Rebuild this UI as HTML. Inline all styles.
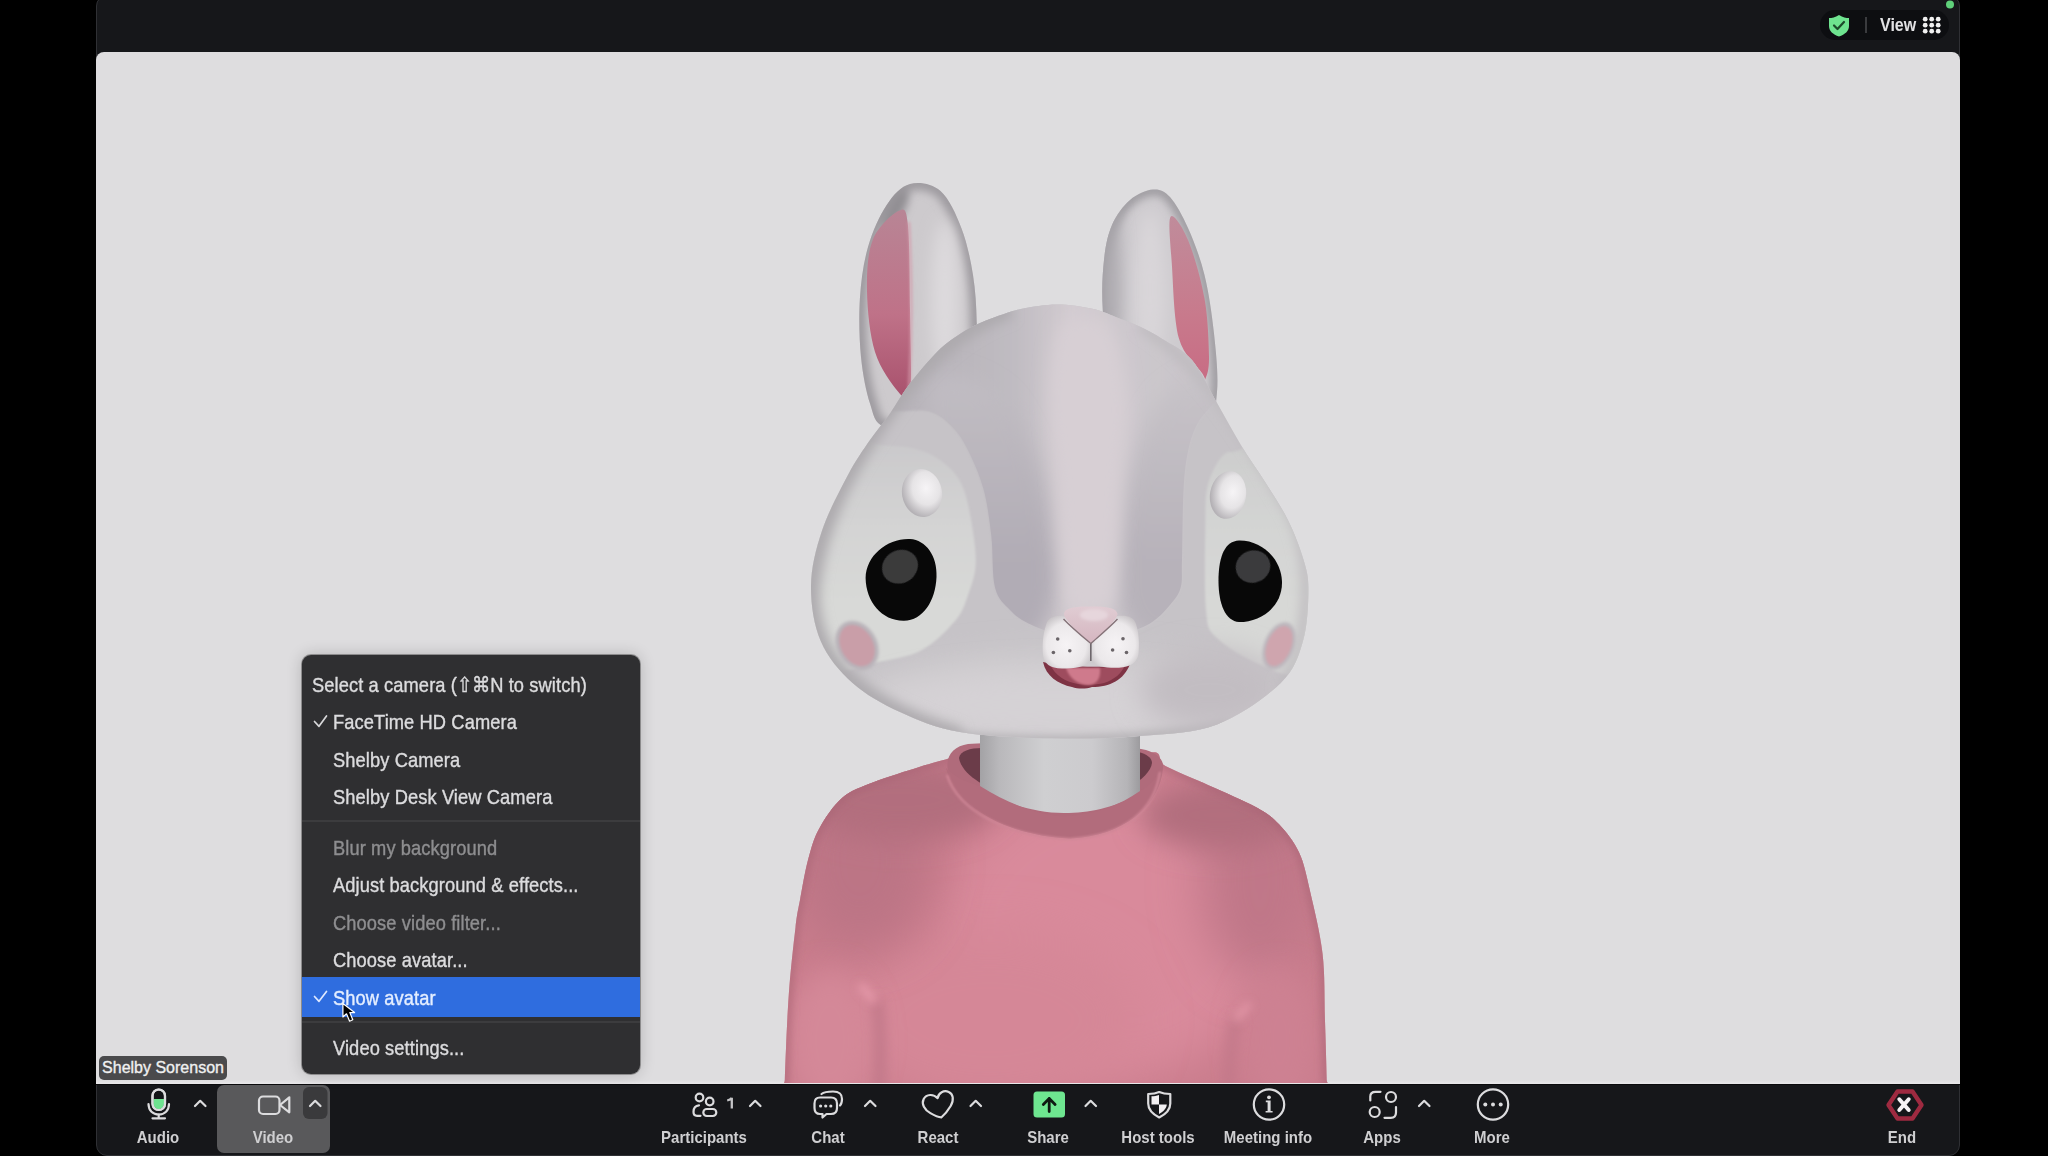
<!DOCTYPE html>
<html><head><meta charset="utf-8">
<style>
*{margin:0;padding:0;box-sizing:border-box}
html,body{width:2048px;height:1156px;overflow:hidden;background:#000;font-family:"Liberation Sans",sans-serif}
#win{position:absolute;left:96px;top:-5px;width:1864px;height:1161px;background:#16171a;border-radius:11px;border:1.5px solid #2f3034;overflow:hidden}
#video{position:absolute;left:96px;top:52px;width:1864px;height:1032px;background:#dedddf;border-radius:8px 8px 0 0;overflow:hidden}
#bunny{position:absolute;left:0;top:0}
.menu{position:absolute;left:302px;top:655px;width:338px;height:419px;background:#2f2f31;border-radius:9px;box-shadow:0 0 16px rgba(0,0,0,0.2),0 0 0 1px rgba(0,0,0,0.3)}
.mi{position:absolute;left:0;width:338px;height:38px;line-height:38px;color:#dcdcde;font-size:18.3px;padding-left:31px;white-space:nowrap;letter-spacing:0.1px;-webkit-text-stroke:0.35px currentColor;padding-top:1.5px}
.mi.dis{color:#8e8e90}
.mi.hdr{padding-left:10px}
.mi .ck{position:absolute;left:11px;top:0;font-size:15px}
.mi.sel{background:#2f6ddf;color:#e4eeff}
.sep{position:absolute;left:0;width:338px;height:2px;background:#3c3c3e}
.name{position:absolute;left:99px;top:1056px;width:128px;height:24px;background:#4a4a4c;border-radius:5px;color:#f0f0f0;font-size:16px;line-height:24px;text-align:center;white-space:nowrap;-webkit-text-stroke:0.35px currentColor}
.lbl{position:absolute;top:1128px;color:#cfcfd1;font-size:15px;font-weight:bold;white-space:nowrap;transform:translateX(-50%);line-height:20px}
.ic{position:absolute;left:0;top:0}
.t{display:inline-block;transform:scaleY(1.15);transform-origin:50% 58%}
.t2{display:inline-block;transform:scaleY(1.11);transform-origin:50% 60%}
</style></head><body>
<div id="win"></div>
<div id="video"><div style="position:absolute;left:0;bottom:0;width:100%;height:4px;background:linear-gradient(#dedddf,#e9e8ea)"></div></div>
<div style="position:absolute;left:96px;top:1084px;width:1864px;height:1px;background:#0b0b0d"></div>
<svg id="bunny" width="2048" height="1156" viewBox="0 0 2048 1156" style="position:absolute;left:0;top:0">
<defs>
  <filter id="b05" filterUnits="userSpaceOnUse" x="0" y="0" width="2048" height="1156"><feGaussianBlur stdDeviation="0.6"/></filter>
  <filter id="b1" filterUnits="userSpaceOnUse" x="0" y="0" width="2048" height="1156"><feGaussianBlur stdDeviation="1"/></filter>
  <filter id="b6" filterUnits="userSpaceOnUse" x="0" y="0" width="2048" height="1156"><feGaussianBlur stdDeviation="6"/></filter>
  <filter id="b2" filterUnits="userSpaceOnUse" x="0" y="0" width="2048" height="1156"><feGaussianBlur stdDeviation="1.5"/></filter>
  <filter id="b4" filterUnits="userSpaceOnUse" x="0" y="0" width="2048" height="1156"><feGaussianBlur stdDeviation="4"/></filter>
  <filter id="b8" filterUnits="userSpaceOnUse" x="0" y="0" width="2048" height="1156"><feGaussianBlur stdDeviation="8"/></filter>
  <filter id="b10" filterUnits="userSpaceOnUse" x="0" y="0" width="2048" height="1156"><feGaussianBlur stdDeviation="10"/></filter>
  <filter id="b14" filterUnits="userSpaceOnUse" x="0" y="0" width="2048" height="1156"><feGaussianBlur stdDeviation="14"/></filter>
  <filter id="b24" filterUnits="userSpaceOnUse" x="0" y="0" width="2048" height="1156"><feGaussianBlur stdDeviation="24"/></filter>
  <clipPath id="vclip"><rect x="96" y="52" width="1864" height="1031"/></clipPath>
  <clipPath id="headclip"><path id="headp" d="M1057.0,304.6 C1068.7,304.6 1082.5,306.7 1092.3,308.8 C1102.1,310.8 1108.0,314.1 1115.8,317.0 C1123.6,319.9 1131.2,322.6 1139.0,326.3 C1146.8,330.0 1153.9,333.6 1162.7,339.2 C1171.5,344.8 1183.1,349.6 1192.0,360.0 C1200.9,370.4 1208.1,387.6 1216.3,401.8 C1224.5,416.0 1233.2,432.2 1241.2,445.4 C1249.2,458.6 1256.8,468.7 1264.6,481.2 C1272.4,493.7 1281.5,507.1 1288.0,520.2 C1294.5,533.3 1300.2,548.4 1303.6,560.0 C1307.0,571.6 1308.5,576.5 1308.4,590.0 C1308.3,603.5 1307.6,625.5 1303.0,641.0 C1298.4,656.5 1295.0,669.1 1280.7,683.0 C1266.4,696.9 1240.5,715.6 1217.0,724.4 C1193.5,733.2 1167.5,733.7 1140.0,736.0 C1112.5,738.3 1082.0,739.0 1052.0,738.3 C1022.0,737.6 985.3,736.4 960.0,732.0 C934.7,727.6 917.9,720.2 900.0,712.0 C882.1,703.8 865.8,694.8 852.6,683.0 C839.4,671.2 827.6,657.2 820.7,641.0 C813.8,624.8 810.8,604.4 811.0,586.0 C811.2,567.6 815.8,549.2 822.0,530.7 C828.2,512.2 840.0,490.1 848.0,475.0 C856.0,459.9 863.0,450.3 870.0,440.0 C877.0,429.7 883.4,422.8 890.0,413.4 C896.6,404.0 901.9,393.9 909.9,383.5 C917.9,373.1 930.1,358.9 938.0,351.0 C945.9,343.1 950.8,340.3 957.0,336.0 C963.2,331.7 968.3,328.6 975.2,325.2 C982.1,321.8 990.8,318.5 998.6,315.8 C1006.4,313.1 1012.3,310.6 1022.0,308.8 C1031.7,306.9 1045.3,304.6 1057.0,304.6 Z"/></clipPath>
  <clipPath id="earLclip"><path id="earLp" d="M910.0,184.0 C919.0,181.7 931.9,183.6 940.5,191.0 C949.1,198.4 956.1,214.4 961.5,228.4 C966.9,242.4 970.5,259.4 973.0,275.0 C975.5,290.6 976.4,306.2 976.7,322.0 C977.0,337.8 982.8,352.0 975.0,370.0 C967.2,388.0 945.2,420.5 930.0,430.0 C914.8,439.5 894.0,431.4 884.0,427.0 C874.0,422.6 873.8,415.3 870.0,403.6 C866.2,391.9 862.7,374.5 861.0,357.0 C859.3,339.5 858.7,316.8 859.9,298.5 C861.1,280.2 863.5,262.6 868.0,247.0 C872.5,231.4 879.7,215.5 886.7,205.0 C893.7,194.5 901.0,186.3 910.0,184.0 Z"/></clipPath>
  <clipPath id="earRclip"><path id="earRp" d="M1153.0,189.5 C1159.7,189.0 1164.2,190.6 1170.0,197.0 C1175.8,203.4 1182.2,215.0 1188.0,228.0 C1193.8,241.0 1200.2,257.4 1204.5,275.0 C1208.8,292.6 1211.9,314.0 1214.0,333.5 C1216.1,353.0 1218.5,375.9 1217.0,392.0 C1215.5,408.1 1214.5,423.7 1205.0,430.0 C1195.5,436.3 1175.5,438.3 1160.0,430.0 C1144.5,421.7 1121.5,400.0 1112.0,380.0 C1102.5,360.0 1104.1,330.0 1102.8,310.0 C1101.5,290.0 1102.5,274.2 1104.0,260.0 C1105.5,245.8 1107.7,235.0 1112.0,225.0 C1116.3,215.0 1123.2,205.9 1130.0,200.0 C1136.8,194.1 1146.3,190.0 1153.0,189.5 Z"/></clipPath>
  <clipPath id="panelclip"><path d="M888.0,410.0 C899.5,413.5 918.3,408.2 929.0,411.0 C939.7,413.8 945.9,420.2 952.4,426.7 C958.9,433.2 962.8,439.6 968.0,450.0 C973.2,460.4 979.6,474.7 983.5,489.0 C987.4,503.3 989.4,519.4 991.3,535.8 C993.2,552.2 991.9,575.1 995.0,587.5 C998.1,599.9 1004.4,604.0 1010.0,610.0 C1015.6,616.0 1020.2,619.3 1028.5,623.5 C1036.8,627.7 1049.6,632.2 1060.0,635.0 C1070.4,637.8 1081.0,640.0 1091.0,640.0 C1101.0,640.0 1110.2,637.8 1120.0,635.0 C1129.8,632.2 1141.7,628.5 1150.0,623.5 C1158.3,618.5 1164.9,611.0 1170.0,605.0 C1175.1,599.0 1178.7,595.0 1180.7,587.5 C1182.7,580.0 1181.5,576.4 1182.0,560.0 C1182.5,543.6 1182.5,507.3 1183.6,489.0 C1184.6,470.7 1186.0,460.9 1188.3,450.0 C1190.6,439.1 1193.6,431.1 1197.6,423.6 C1201.5,416.1 1204.9,413.9 1212.0,405.0 C1219.1,396.1 1258.7,392.5 1240.0,370.0 C1221.3,347.5 1140.0,286.7 1100.0,270.0 C1060.0,253.3 1040.0,250.0 1000.0,270.0 C960.0,290.0 878.7,366.7 860.0,390.0 C841.3,413.3 876.5,406.5 888.0,410.0 Z"/></clipPath>
  <clipPath id="shirtclip"><path id="shirtp" d="M1060.0,790.0 C1029.5,789.8 983.3,757.3 965.0,752.0 C946.7,746.7 957.5,755.5 950.0,758.0 C942.5,760.5 932.8,762.7 920.0,766.7 C907.2,770.8 886.4,777.1 873.4,782.3 C860.4,787.5 851.4,790.0 842.3,797.8 C833.2,805.6 824.7,818.6 819.0,829.0 C813.3,839.4 811.2,848.2 808.0,860.0 C804.8,871.8 802.1,888.8 800.0,900.0 C797.9,911.2 797.4,911.7 795.5,927.5 C793.6,943.3 790.6,969.2 788.8,994.6 C787.0,1020.0 785.6,1059.1 784.8,1080.0 C784.0,1100.9 693.6,1113.3 784.0,1120.0 C874.4,1126.7 1236.5,1126.7 1327.0,1120.0 C1417.5,1113.3 1327.0,1096.5 1326.7,1080.0 C1326.4,1063.5 1325.7,1042.0 1325.0,1021.0 C1324.3,1000.0 1325.1,975.7 1322.6,954.0 C1320.1,932.3 1313.9,908.0 1310.0,891.0 C1306.1,874.0 1304.2,863.4 1299.0,852.3 C1293.8,841.2 1286.2,831.8 1279.0,824.3 C1271.8,816.8 1267.4,813.5 1255.7,807.0 C1244.0,800.5 1224.0,792.2 1209.0,785.4 C1194.0,778.6 1175.6,771.4 1165.4,766.0 C1155.2,760.6 1165.6,749.0 1148.0,753.0 C1130.4,757.0 1090.5,790.2 1060.0,790.0 Z"/></clipPath>
  <linearGradient id="pinkL" x1="0" y1="0" x2="0" y2="1"><stop offset="0" stop-color="#b88595"/><stop offset="0.55" stop-color="#bf7288"/><stop offset="1" stop-color="#a8506c"/></linearGradient>
  <linearGradient id="pinkR" x1="0" y1="0" x2="0" y2="1"><stop offset="0" stop-color="#c08c9b"/><stop offset="0.6" stop-color="#c87a8c"/><stop offset="1" stop-color="#c86c84"/></linearGradient>
  <linearGradient id="neckg" x1="0" y1="0" x2="1" y2="0"><stop offset="0" stop-color="#a3a2a5"/><stop offset="0.12" stop-color="#b9b8bb"/><stop offset="0.4" stop-color="#cfcfd1"/><stop offset="0.7" stop-color="#cccbce"/><stop offset="0.92" stop-color="#b5b4b7"/><stop offset="1" stop-color="#9c9b9e"/></linearGradient>
  <radialGradient id="browg" cx="0.62" cy="0.42" r="0.62"><stop offset="0" stop-color="#f6f4f6"/><stop offset="0.55" stop-color="#e6e4e6"/><stop offset="1" stop-color="#b4b1b5"/></radialGradient>
  <radialGradient id="lobeg" cx="0.5" cy="0.55" r="0.6"><stop offset="0" stop-color="#f6f3f5"/><stop offset="0.7" stop-color="#ebe8ea"/><stop offset="1" stop-color="#c9c5c8"/></radialGradient>
  <linearGradient id="patchg" gradientUnits="userSpaceOnUse" x1="0" y1="440" x2="0" y2="600"><stop offset="0" stop-color="#cac9cb"/><stop offset="0.5" stop-color="#d3d3d3"/><stop offset="1" stop-color="#d8d9d7"/></linearGradient>
  <linearGradient id="patchgR" gradientUnits="userSpaceOnUse" x1="0" y1="445" x2="0" y2="600"><stop offset="0" stop-color="#cdcdcd"/><stop offset="0.5" stop-color="#d3d4d3"/><stop offset="1" stop-color="#d7d8d6"/></linearGradient>
  <linearGradient id="panelg" gradientUnits="userSpaceOnUse" x1="930" y1="0" x2="1215" y2="0"><stop offset="0" stop-color="#b7b3b9"/><stop offset="0.3" stop-color="#c0bcc2"/><stop offset="0.5" stop-color="#d3ccd1"/><stop offset="0.68" stop-color="#cdc8cd"/><stop offset="1" stop-color="#c8c4c9"/></linearGradient>
  <linearGradient id="bandgL" gradientUnits="userSpaceOnUse" x1="0" y1="390" x2="0" y2="560"><stop offset="0" stop-color="#c0bcc2"/><stop offset="1" stop-color="#b1acb5"/></linearGradient>
  <linearGradient id="bandgR" gradientUnits="userSpaceOnUse" x1="0" y1="390" x2="0" y2="560"><stop offset="0" stop-color="#c6c2c7"/><stop offset="1" stop-color="#b7b2ba"/></linearGradient>
  <linearGradient id="noseg" x1="0" y1="0" x2="0" y2="1"><stop offset="0" stop-color="#e0ccd3"/><stop offset="1" stop-color="#d5b6c0"/></linearGradient>
</defs>
<g clip-path="url(#vclip)">
<!-- ears -->
<g clip-path="url(#earLclip)">
  <rect x="840" y="170" width="150" height="280" fill="#cdcacd"/>
  <use href="#earLp" fill="none" stroke="#9d9a9f" stroke-width="14" filter="url(#b4)"/>
  <ellipse cx="945" cy="300" rx="14" ry="80" fill="#dddadd" filter="url(#b8)"/>
  <ellipse cx="895" cy="210" rx="9" ry="24" fill="#918e93" filter="url(#b4)" transform="rotate(28 895 210)"/>
  <path d="M898.4,211.0 C904.2,208.3 905.9,207.2 907.8,223.7 C909.7,240.2 909.6,281.9 910.0,310.0 C910.4,338.1 911.9,378.3 910.0,392.0 C908.1,405.7 904.2,398.7 898.4,392.0 C892.6,385.3 880.2,368.8 875.0,352.0 C869.8,335.2 867.4,310.2 867.0,291.5 C866.6,272.8 867.5,253.4 872.7,240.0 C877.9,226.6 892.5,213.7 898.4,211.0 Z" fill="url(#pinkL)"/>
  <path d="M909,222 C912,280 912,340 909,392" stroke="#d39aaa" stroke-width="2" fill="none" filter="url(#b2)"/>
</g>
<g clip-path="url(#earRclip)">
  <rect x="1090" y="175" width="140" height="260" fill="#cecbcf"/>
  <use href="#earRp" fill="none" stroke="#9e9ba0" stroke-width="12" filter="url(#b4)"/>
  <ellipse cx="1150" cy="290" rx="16" ry="80" fill="#d9d6d9" filter="url(#b8)"/>
  <ellipse cx="1112" cy="290" rx="8" ry="90" fill="#a9a6ab" filter="url(#b8)"/>
  <path d="M1170.6,216.7 C1173.3,212.8 1182.3,226.4 1188.0,240.0 C1193.7,253.6 1201.0,279.0 1204.5,298.5 C1208.0,318.0 1208.8,343.8 1209.0,357.0 C1209.2,370.2 1206.9,375.3 1205.7,378.0 C1204.5,380.7 1206.5,379.7 1202.0,373.0 C1197.5,366.3 1183.8,356.2 1178.8,338.0 C1173.8,319.8 1173.2,283.7 1171.8,263.5 C1170.4,243.3 1167.9,220.6 1170.6,216.7 Z" fill="url(#pinkR)"/>
</g>

<!-- shirt -->
<g clip-path="url(#shirtclip)">
  <rect x="770" y="730" width="570" height="370" fill="#c97c8c"/>
  <ellipse cx="1110" cy="930" rx="170" ry="150" fill="#d98a9b" filter="url(#b24)"/>
  <ellipse cx="990" cy="1020" rx="150" ry="90" fill="#d58797" filter="url(#b24)"/>
  <ellipse cx="860" cy="860" rx="70" ry="90" fill="#bc7585" filter="url(#b24)"/>
  <ellipse cx="1260" cy="880" rx="60" ry="100" fill="#c07788" filter="url(#b24)"/>
  <ellipse cx="900" cy="800" rx="100" ry="40" fill="#b26e7e" filter="url(#b14)"/>
  <ellipse cx="1220" cy="815" rx="80" ry="35" fill="#b26e7e" filter="url(#b14)"/>
  <ellipse cx="830" cy="1040" rx="45" ry="70" fill="#d48898" filter="url(#b14)"/>
  <ellipse cx="1280" cy="1040" rx="40" ry="70" fill="#cd8192" filter="url(#b14)"/>
  <path d="M877,1000 C881,1030 881,1060 879,1090" stroke="#c07788" stroke-width="10" fill="none" filter="url(#b6)"/>
  <path d="M860,985 C865,990 870,995 874,1002" stroke="#e69aaa" stroke-width="7" fill="none" filter="url(#b4)"/>
  <path d="M1236,1018 C1231,1040 1229,1065 1229,1090" stroke="#c27889" stroke-width="10" fill="none" filter="url(#b6)"/>
  <path d="M1250,1004 C1245,1008 1240,1014 1236,1020" stroke="#e498a8" stroke-width="6" fill="none" filter="url(#b4)"/>
  <use href="#shirtp" fill="none" stroke="#a86474" stroke-width="5" filter="url(#b4)"/>
</g>
<!-- collar -->
<path d="M948,770 C945,756 954,746 968,744 C1000,741 1110,742 1146,750 C1158,754 1164,760 1163,768 C1160,805 1125,836 1070,838.5 C1005,836 955,805 948,770 Z" fill="#b06b7b"/>
<path d="M959,758 C960,751 970,748 982,748 L1138,752 C1147,754 1152,758 1152,763 C1150,778 1120,800 1060,805 C1000,800 962,778 959,758 Z" fill="#6b3c49"/>
<!-- neck -->
<path d="M980,700 L1140,700 L1140,795 C1110,808 1090,813 1064,813 C1030,813 1000,800 980,790 Z" fill="url(#neckg)"/>
<path d="M946,768 C952,775 965,782 980,786 C1010,805 1040,815 1064,816.5 C1095,815 1120,805 1140,791 C1150,786 1156,778 1161,768 C1160,805 1125,836 1070,838.5 C1005,836 955,805 946,768 Z" fill="#b26c7c"/>
<path d="M947,775 C958,810 1005,836 1070,839 C1125,836 1155,810 1160,772" stroke="#cf8696" stroke-width="2.2" fill="none" filter="url(#b1)"/>

<!-- head -->
<g clip-path="url(#headclip)">
  <rect x="780" y="290" width="560" height="470" fill="#c6c3c7"/>
  <ellipse cx="1070" cy="710" rx="230" ry="60" fill="#cecbce" filter="url(#b14)"/>
  <path d="M888.0,410.0 C899.5,413.5 918.3,408.2 929.0,411.0 C939.7,413.8 945.9,420.2 952.4,426.7 C958.9,433.2 962.8,439.6 968.0,450.0 C973.2,460.4 979.6,474.7 983.5,489.0 C987.4,503.3 989.4,519.4 991.3,535.8 C993.2,552.2 991.9,575.1 995.0,587.5 C998.1,599.9 1004.4,604.0 1010.0,610.0 C1015.6,616.0 1020.2,619.3 1028.5,623.5 C1036.8,627.7 1049.6,632.2 1060.0,635.0 C1070.4,637.8 1081.0,640.0 1091.0,640.0 C1101.0,640.0 1110.2,637.8 1120.0,635.0 C1129.8,632.2 1141.7,628.5 1150.0,623.5 C1158.3,618.5 1164.9,611.0 1170.0,605.0 C1175.1,599.0 1178.7,595.0 1180.7,587.5 C1182.7,580.0 1181.5,576.4 1182.0,560.0 C1182.5,543.6 1182.5,507.3 1183.6,489.0 C1184.6,470.7 1186.0,460.9 1188.3,450.0 C1190.6,439.1 1193.6,431.1 1197.6,423.6 C1201.5,416.1 1204.9,413.9 1212.0,405.0 C1219.1,396.1 1258.7,392.5 1240.0,370.0 C1221.3,347.5 1140.0,286.7 1100.0,270.0 C1060.0,253.3 1040.0,250.0 1000.0,270.0 C960.0,290.0 878.7,366.7 860.0,390.0 C841.3,413.3 876.5,406.5 888.0,410.0 Z" fill="url(#panelg)" filter="url(#b1)"/>
  <g clip-path="url(#panelclip)">
    <path d="M930.0,380.0 C941.7,362.5 981.7,380.0 1000.0,395.0 C1018.3,410.0 1030.8,442.5 1040.0,470.0 C1049.2,497.5 1053.3,536.3 1055.0,560.0 C1056.7,583.7 1055.0,598.7 1050.0,612.0 C1045.0,625.3 1040.0,637.0 1025.0,640.0 C1010.0,643.0 975.8,653.3 960.0,630.0 C944.2,606.7 935.0,541.7 930.0,500.0 C925.0,458.3 918.3,397.5 930.0,380.0 Z" fill="url(#bandgL)" filter="url(#b10)"/>
    <path d="M1225.0,380.0 C1215.0,362.5 1180.8,380.0 1165.0,395.0 C1149.2,410.0 1137.8,442.5 1130.0,470.0 C1122.2,497.5 1119.3,536.3 1118.0,560.0 C1116.7,583.7 1117.0,598.7 1122.0,612.0 C1127.0,625.3 1133.3,637.0 1148.0,640.0 C1162.7,643.0 1197.2,653.3 1210.0,630.0 C1222.8,606.7 1222.5,541.7 1225.0,500.0 C1227.5,458.3 1235.0,397.5 1225.0,380.0 Z" fill="url(#bandgR)" filter="url(#b10)"/>
    <path d="M1085.0,318.0 C1094.0,318.0 1104.8,316.3 1112.0,330.0 C1119.2,343.7 1126.3,375.0 1128.0,400.0 C1129.7,425.0 1123.7,453.3 1122.0,480.0 C1120.3,506.7 1119.7,539.2 1118.0,560.0 C1116.3,580.8 1116.7,596.3 1112.0,605.0 C1107.3,613.7 1097.3,612.0 1090.0,612.0 C1082.7,612.0 1072.7,613.7 1068.0,605.0 C1063.3,596.3 1064.0,580.8 1062.0,560.0 C1060.0,539.2 1058.3,506.7 1056.0,480.0 C1053.7,453.3 1047.7,425.0 1048.0,400.0 C1048.3,375.0 1051.8,343.7 1058.0,330.0 C1064.2,316.3 1076.0,318.0 1085.0,318.0 Z" fill="#d7cfd4" filter="url(#b8)"/>
  </g>
  <path d="M885.0,445.4 C907.2,446.8 904.9,446.4 913.5,448.5 C922.1,450.6 929.5,453.3 936.8,458.0 C944.0,462.7 951.8,468.8 957.0,476.6 C962.2,484.4 964.9,490.7 968.0,504.6 C971.1,518.5 975.8,544.9 975.8,560.0 C975.8,575.1 971.5,584.8 968.0,595.0 C964.5,605.2 962.8,611.8 955.0,621.0 C947.2,630.2 934.3,643.5 921.0,650.5 C907.7,657.5 889.2,659.5 875.0,662.7 C860.8,666.0 850.2,672.1 836.0,670.0 C821.8,667.9 799.3,688.3 790.0,650.0 C780.7,611.7 764.2,474.1 780.0,440.0 C795.8,405.9 862.8,444.0 885.0,445.4 Z" fill="url(#patchg)" filter="url(#b1)"/>
  <path d="M1239.7,450.0 C1250.4,446.1 1274.1,405.0 1290.0,430.0 C1305.9,455.0 1333.3,560.0 1335.0,600.0 C1336.7,640.0 1312.3,659.2 1300.0,670.0 C1287.7,680.8 1274.8,670.3 1261.0,665.0 C1247.2,659.7 1226.2,647.2 1217.0,638.0 C1207.8,628.8 1207.9,629.7 1206.0,610.0 C1204.1,590.3 1205.2,540.2 1205.4,520.0 C1205.6,499.8 1205.4,497.8 1207.0,489.0 C1208.6,480.2 1211.7,473.2 1214.8,467.2 C1217.9,461.2 1221.5,456.1 1225.7,453.2 C1229.9,450.3 1229.0,453.9 1239.7,450.0 Z" fill="url(#patchgR)" filter="url(#b1)"/>
  <ellipse cx="1060" cy="705" rx="190" ry="34" fill="#d5d2d5" filter="url(#b14)"/>
  <path d="M1010,308 C960,325 920,360 880,420 C845,470 815,530 810,590 C808,650 840,700 960,738" stroke="#adaaae" stroke-width="20" fill="none" filter="url(#b6)"/>
  <path d="M900,726 C980,748 1150,745 1230,722" stroke="#b5b2b6" stroke-width="10" fill="none" filter="url(#b4)"/>
  <ellipse cx="1210" cy="690" rx="70" ry="40" fill="#c2bdc2" filter="url(#b14)"/>
  <path d="M1140,325 C1200,360 1250,440 1290,510 C1315,560 1312,640 1280,690" stroke="#bdbabe" stroke-width="10" fill="none" filter="url(#b6)"/>
</g>

<!-- brow bumps -->
<ellipse cx="922" cy="493" rx="20" ry="24" fill="url(#browg)" transform="rotate(-10 922 493)"/>
<ellipse cx="1228" cy="495" rx="18" ry="24" fill="url(#browg)" transform="rotate(10 1228 495)"/>
<!-- cheeks -->
<ellipse cx="857" cy="645.5" rx="20" ry="26" fill="#b9b3b9" filter="url(#b2)" transform="rotate(-30 857 645.5)"/>
<ellipse cx="857" cy="645.5" rx="16" ry="22" fill="#c99ea8" filter="url(#b1)" transform="rotate(-30 857 645.5)"/>
<ellipse cx="1279" cy="646" rx="15" ry="25" fill="#bdb7bd" filter="url(#b2)" transform="rotate(22 1279 646)"/>
<ellipse cx="1279" cy="646" rx="12" ry="21" fill="#cfa5ae" filter="url(#b1)" transform="rotate(22 1279 646)"/>
<!-- eyes -->
<path d="M910,539 C926,540 937.5,556 936.5,577 C935.5,601 923,620.5 904,620.7 C882,621 866,602 865.6,578 C866,555 888,538 910,539 Z" fill="#080808"/>
<ellipse cx="900" cy="566.7" rx="18.5" ry="16.5" fill="#3a3a3b" transform="rotate(-30 900 566.7)" filter="url(#b05)"/>
<path d="M1239,540.4 C1262,540 1281.5,559 1282,582 C1282.5,606 1262,622 1239,622 C1225,621 1218,603 1218.5,578 C1219,556 1225,541 1239,540.4 Z" fill="#080808"/>
<ellipse cx="1253" cy="566.6" rx="17.5" ry="16" fill="#3b3b3c" transform="rotate(-20 1253 566.6)" filter="url(#b05)"/>
<!-- mouth -->
<path d="M1043,662 C1046,676 1058,684 1072,687 C1078,689 1086,689 1092,687 C1110,687 1124,680 1130,664 C1110,668 1070,668 1043,662 Z" fill="#7e3344"/>
<path d="M1050,664 C1055,676 1066,682 1078,684 C1086,685 1096,685 1104,683 C1114,680 1122,673 1125,665 C1105,669 1072,669 1050,664 Z" fill="#9e4c5e"/>
<path d="M1066,668 C1070,680 1080,685 1088,685 C1097,685 1101,678 1100,668 Z" fill="#cf7a8c" filter="url(#b1)"/>
<!-- muzzle -->
<path d="M1046,625 C1048,617 1056,615 1064,616.5 L1076,618 L1090,642 L1090,661 C1086,667 1075,668.5 1062,668.5 C1050,668 1044,664 1043,655 C1042,645 1043,634 1046,625 Z" fill="url(#lobeg)"/>
<path d="M1136,624 C1134,617 1127,615 1119,615.8 L1106,618 L1091.5,642 L1091.5,661 C1096,667 1106,668 1119,667.7 C1130,667 1137,663 1138.5,654 C1139.5,644 1139,633 1136,624 Z" fill="url(#lobeg)"/>
<path d="M1090.8,643 L1090.8,661" stroke="#6e676c" stroke-width="1.6"/>
<!-- nose -->
<path d="M1064,614 C1064,608 1075,606 1091,606.5 C1106,606 1117,608 1117.5,614 C1117,620 1102,634 1091,643 C1080,634 1064,620 1064,614 Z" fill="url(#noseg)"/>
<path d="M1063.5,619 C1072,628 1083,637 1090.8,643.5 C1098,637 1109,628 1117.5,619" stroke="#857278" stroke-width="1.4" fill="none"/>
<ellipse cx="1094" cy="615" rx="14" ry="6" fill="#e6d6dc" filter="url(#b2)"/>
<g fill="#6a6468">
  <circle cx="1057.7" cy="639" r="1.8"/><circle cx="1053.4" cy="652.5" r="1.8"/><circle cx="1069.8" cy="650.8" r="1.8"/>
  <circle cx="1123" cy="638.7" r="1.8"/><circle cx="1112.6" cy="650" r="1.8"/><circle cx="1126.5" cy="652.5" r="1.8"/>
</g>
</g>

</svg>

<svg id="chrome" width="2048" height="1156" viewBox="0 0 2048 1156" style="position:absolute;left:0;top:0;pointer-events:none">
<!-- top-right pill -->
<rect x="1820" y="10" width="129" height="30" rx="15" fill="#0d0e11"/>
<path d="M1839,15 C1843,17.5 1846,18 1849,18 L1849,26 C1849,31 1845,34.5 1839,36.5 C1833,34.5 1829,31 1829,26 L1829,18 C1832,18 1835,17.5 1839,15 Z" fill="#6ee38f"/>
<path d="M1834,25.5 L1837.5,29 L1844,22" stroke="#1c4a2a" stroke-width="2.2" fill="none" stroke-linecap="round" stroke-linejoin="round"/>
<rect x="1865" y="17" width="2" height="16" fill="#3a3b3e"/>
<g fill="#f0f0f0"><circle cx="1925.2" cy="19.2" r="2.4"/><circle cx="1931.7" cy="19.2" r="2.4"/><circle cx="1938.2" cy="19.2" r="2.4"/><circle cx="1925.2" cy="25.2" r="2.4"/><circle cx="1931.7" cy="25.2" r="2.4"/><circle cx="1938.2" cy="25.2" r="2.4"/><circle cx="1925.2" cy="31.2" r="2.4"/><circle cx="1931.7" cy="31.2" r="2.4"/><circle cx="1938.2" cy="31.2" r="2.4"/></g>
<circle cx="1950" cy="4.5" r="4" fill="#5fd07a"/>


<!-- video button bg -->
<rect x="217" y="1085" width="113" height="68" rx="7" fill="#59595b"/>
<rect x="303" y="1087" width="24.5" height="32" rx="6" fill="#3a3a3c"/>

<g stroke="#dcdcde" stroke-width="2.2" fill="none" stroke-linecap="round" stroke-linejoin="round">
  <!-- mic -->
  <rect x="152.5" y="1089.5" width="12.5" height="20.5" rx="6.25" fill="#131417"/>
  <path d="M153.5,1099 L164,1099 L164,1103.5 C164,1107 161.5,1109 158.7,1109 C156,1109 153.5,1107 153.5,1103.5 Z" fill="#6ee38f" stroke="none"/>
  <rect x="152.5" y="1089.5" width="12.5" height="20.5" rx="6.25"/>
  <path d="M148.5,1104 C148.5,1110.5 153,1114.5 158.7,1114.5 C164.5,1114.5 169,1110.5 169,1104"/>
  <path d="M158.7,1114.5 L158.7,1118.3 M152.5,1118.3 L165,1118.3"/>
  <!-- carets -->
  <path d="M195,1106 L200.2,1100.8 L205.5,1106"/>
  <path d="M310,1106 L315.2,1100.8 L320.5,1106"/>
  <path d="M750,1106 L755.2,1100.8 L760.5,1106"/>
  <path d="M865,1106 L870.2,1100.8 L875.5,1106"/>
  <path d="M970.5,1106 L975.7,1100.8 L981,1106"/>
  <path d="M1085.5,1106 L1090.7,1100.8 L1096,1106"/>
  <path d="M1419,1106 L1424.2,1100.8 L1429.5,1106"/>
  <!-- video cam -->
  <rect x="259" y="1096.5" width="20.5" height="17.5" rx="4"/>
  <path d="M280,1105 L289.3,1097.3 L289.3,1112.3 Z"/>
  <!-- participants -->
  <circle cx="699.5" cy="1097.5" r="3.8"/>
  <path d="M700.5,1115.8 L697,1115.8 C694.5,1115.8 693.5,1114.5 693.5,1112 C693.5,1107.5 695.5,1105.5 699,1105.3"/>
  <circle cx="709.7" cy="1101.5" r="3.8"/>
  <rect x="703.3" y="1109" width="13" height="7" rx="3.5"/>
  <!-- chat -->
  <path d="M821.5,1094 C824,1092 828,1091.5 833,1091.5 C840,1091.5 842,1094 842,1099 C842,1102 841.5,1104 840,1105.5"/>
  <path d="M820,1097.5 L831,1097.5 C835,1097.5 837,1099.5 837,1103.5 L837,1108 C837,1112 835,1114 831,1114 L826.5,1114 L822.5,1117.5 L822.5,1114 L820,1114 C816,1114 814.5,1112 814.5,1108 L814.5,1103.5 C814.5,1099.5 816,1097.5 820,1097.5 Z"/>
  <!-- heart -->
  <path d="M939.5,1098 C937,1092.5 930,1090.5 926,1094.5 C922,1098.5 923.5,1105 928,1110 C931.5,1114 934.5,1116.5 937,1117.5 C940.5,1116 945.5,1113 949.5,1109.5 C955,1104.5 955.5,1098.5 952,1095.5 C948,1092 942,1093 939.5,1098 Z" transform="rotate(-18 939 1104)"/>
  <!-- host tools shield -->
  <path d="M1159.2,1092 C1163,1093.7 1166.5,1094 1170.3,1094 L1170.3,1103.5 C1170.3,1109.5 1166,1114 1159.2,1117.5 C1152.5,1114 1148.2,1109.5 1148.2,1103.5 L1148.2,1094 C1152,1094 1155.5,1093.7 1159.2,1092 Z"/>
  <!-- meeting info -->
  <circle cx="1269" cy="1104.5" r="15.2"/>
  <!-- apps -->
  <path d="M1370.3,1100.5 L1370.3,1096.5 C1370.3,1093.5 1372.5,1091.8 1375.5,1091.8 L1380.5,1091.8"/>
  <circle cx="1391" cy="1097" r="5"/>
  <circle cx="1374.7" cy="1112" r="5"/>
  <path d="M1396,1107 L1396,1112.5 C1396,1115.8 1394,1117.8 1390.8,1117.8 L1384.5,1117.8"/>
  <!-- more -->
  <circle cx="1493" cy="1104.5" r="15.2"/>
</g>
<!-- host tools quarters -->
<path d="M1151.5,1096.3 C1154.5,1096.3 1156.5,1096 1159,1095 L1159,1104.5 L1151.5,1104.5 Z" fill="#f2f0f2"/>
<path d="M1159,1104.5 L1166.8,1104.5 C1166.5,1108.5 1163.5,1111.5 1159,1114 Z" fill="#f2f0f2"/>
<!-- chat dots -->
<g fill="#dcdcde">
  <circle cx="820.6" cy="1106" r="1.6"/><circle cx="825.7" cy="1106" r="1.6"/><circle cx="830.8" cy="1106" r="1.6"/>
  <circle cx="1485.3" cy="1104.5" r="2"/><circle cx="1493" cy="1104.5" r="2"/><circle cx="1500.7" cy="1104.5" r="2"/>
</g>
<!-- info i -->
<circle cx="1269" cy="1097.3" r="1.9" fill="#dcdcde"/><path d="M1265.8,1100.6 L1270.6,1100.6 L1270.6,1111 L1272.6,1111 L1272.6,1112.6 L1265.6,1112.6 L1265.6,1111 L1267.6,1111 L1267.6,1102.2 L1265.8,1102.2 Z" fill="#dcdcde"/>
<!-- participants 1 -->
<path d="M731.8,1097.8 L731.8,1108.6 M727.2,1100.5 C729.5,1100 731,1099 731.8,1097.8" stroke="#c4c4c6" stroke-width="2.3" fill="none"/>
<!-- share -->
<rect x="1033.5" y="1091.5" width="31.5" height="26" rx="3.5" fill="#6ee690"/>
<path d="M1049.2,1111.5 L1049.2,1098.5 M1043.3,1104.5 L1049.2,1098.5 L1055.1,1104.5" stroke="#0e1a12" stroke-width="2.8" fill="none" stroke-linecap="round" stroke-linejoin="round"/>
<!-- end -->
<path d="M1897.5,1091.5 L1912.5,1091.5 L1921.5,1105 L1912.5,1118.5 L1897.5,1118.5 L1888.5,1105 Z" fill="none" stroke="#9e2a40" stroke-width="4.4" stroke-linejoin="round"/>
<path d="M1899.3,1099.3 L1908.7,1110 M1908.7,1099.3 L1899.3,1110" stroke="#f6f2f4" stroke-width="4" stroke-linecap="round"/>
</svg>

<div class="menu">
  <div class="mi hdr" style="top:10px"><span class="t">Select a camera (⇧⌘N to switch)</span></div>
  <div class="mi" style="top:47px"><span class="t">FaceTime HD Camera</span></div>
  <div class="mi" style="top:85px"><span class="t">Shelby Camera</span></div>
  <div class="mi" style="top:122px"><span class="t">Shelby Desk View Camera</span></div>
  <div class="sep" style="top:165px"></div>
  <div class="mi dis" style="top:173px"><span class="t">Blur my background</span></div>
  <div class="mi" style="top:210px"><span class="t">Adjust background &amp; effects...</span></div>
  <div class="mi dis" style="top:248px"><span class="t">Choose video filter...</span></div>
  <div class="mi" style="top:285px"><span class="t">Choose avatar...</span></div>
  <div class="mi sel" style="top:322px;height:40px;line-height:40px"><span class="t">Show avatar</span></div>
  <div class="sep" style="top:366px"></div>
  <div class="mi" style="top:373px"><span class="t">Video settings...</span></div>
</div>

<div style="position:absolute;left:1880px;top:15.5px;font-size:16px;font-weight:bold;color:#e2e2e4;line-height:20px"><span class="t2" style="transform:scaleY(1.13)">View</span></div>
<svg style="position:absolute;left:0;top:0" width="2048" height="1156"><path d="M314.5,721.5 L319,726.3 L326.5,716" stroke="#d8d8da" stroke-width="1.7" fill="none" stroke-linecap="round" stroke-linejoin="round"/><path d="M314.5,996.5 L319,1001.3 L326.5,991.5" stroke="#dfe9ff" stroke-width="1.7" fill="none" stroke-linecap="round" stroke-linejoin="round"/></svg>
<svg style="position:absolute;left:0;top:0" width="2048" height="1156"><path d="M342.9,1003.6 L342.9,1017 L346.5,1013.8 L349.6,1021.2 L352.8,1019.8 L349.8,1012.6 L354.6,1012.6 Z" fill="#000" stroke="#fff" stroke-width="1.2" stroke-linejoin="round"/></svg>
<div class="name">Shelby Sorenson</div>

<div class="lbl" style="left:158px"><span class="t2">Audio</span></div>
<div class="lbl" style="left:273px"><span class="t2">Video</span></div>
<div class="lbl" style="left:704px"><span class="t2">Participants</span></div>
<div class="lbl" style="left:828px"><span class="t2">Chat</span></div>
<div class="lbl" style="left:938px"><span class="t2">React</span></div>
<div class="lbl" style="left:1048px"><span class="t2">Share</span></div>
<div class="lbl" style="left:1158px"><span class="t2">Host tools</span></div>
<div class="lbl" style="left:1268px"><span class="t2">Meeting info</span></div>
<div class="lbl" style="left:1382px"><span class="t2">Apps</span></div>
<div class="lbl" style="left:1492px"><span class="t2">More</span></div>
<div class="lbl" style="left:1902px"><span class="t2">End</span></div>

</body></html>
